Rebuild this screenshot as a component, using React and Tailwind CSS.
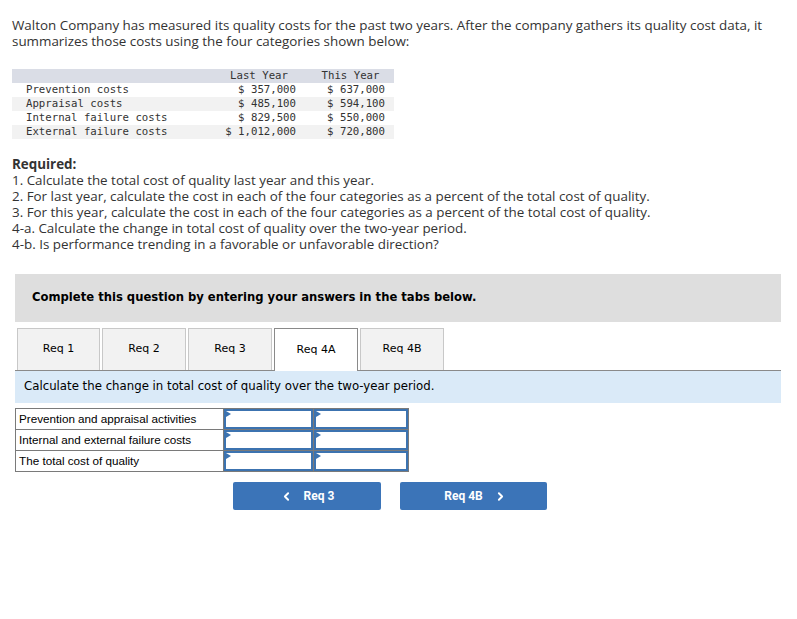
import { FiChevronLeft, FiChevronRight } from "react-icons/fi";

const costs = [
  ["Prevention costs", "$ 357,000", "$ 637,000"],
  ["Appraisal costs", "$ 485,100", "$ 594,100"],
  ["Internal failure costs", "$ 829,500", "$ 550,000"],
  ["External failure costs", "$ 1,012,000", "$ 720,800"],
];

const required = [
  "1. Calculate the total cost of quality last year and this year.",
  "2. For last year, calculate the cost in each of the four categories as a percent of the total cost of quality.",
  "3. For this year, calculate the cost in each of the four categories as a percent of the total cost of quality.",
  "4-a. Calculate the change in total cost of quality over the two-year period.",
  "4-b. Is performance trending in a favorable or unfavorable direction?",
];

const tabs = ["Req 1", "Req 2", "Req 3", "Req 4A", "Req 4B"];

const rows = [
  "Prevention and appraisal activities",
  "Internal and external failure costs",
  "The total cost of quality",
];

function InputBox() {
  return (
    <div className="relative h-[20px] border-2 border-[#3c73b0] bg-white">
      <span className="absolute left-0 top-0 w-0 h-0 border-y-[3px] border-y-transparent border-l-[5px] border-l-[#3c73b0]" />
    </div>
  );
}

function App() {
  return (
    <div className="w-[797px] min-h-[619px] bg-white text-[#333] font-['Open_Sans',sans-serif]">
      <div className="pl-[12px] pt-[17px] pr-[16px]">
        <p className="text-[13.4px] leading-[16px]">
          Walton Company has measured its quality costs for the past two years. After the company gathers its quality cost data, it summarizes those costs using the four categories shown below:
        </p>

        <table className="mt-[20px] w-[382px] border-collapse font-['DejaVu_Sans_Mono',monospace] text-[10.7px] leading-[14px] text-[#333]">
          <thead>
            <tr className="bg-[#dadde6]">
              <th className="w-[206px] h-[14px]" />
              <th className="w-[83px] font-normal text-center pr-[1px]">Last Year</th>
              <th className="font-normal text-center pl-[6px]">This Year</th>
            </tr>
          </thead>
          <tbody>
            {costs.map((c, i) => (
              <tr key={c[0]} className={i % 2 === 1 ? "bg-[#f2f2f2]" : "bg-white"}>
                <td className="pl-[14px] h-[14px] text-left">{c[0]}</td>
                <td className="text-right pr-[5px]">{c[1]}</td>
                <td className="text-right pr-[9px]">{c[2]}</td>
              </tr>
            ))}
          </tbody>
        </table>

        <div className="mt-[17px] text-[13.4px] leading-[16px]">
          <p className="font-bold">Required:</p>
          {required.map((r) => (
            <p key={r}>{r}</p>
          ))}
        </div>
      </div>

      <div className="ml-[15px] w-[766px] mt-[22px] font-['DejaVu_Sans',sans-serif]">
        <div className="h-[48px] bg-[#dedede] flex items-center pl-[17px] pb-[1px] text-[11.6px] font-bold text-black">
          Complete this question by entering your answers in the tabs below.
        </div>

        <div className="mt-[6px] flex gap-[2px] pl-[2px] border-b border-[#8a8a8a]">
          {tabs.map((t, i) => (
            <div
              key={t}
              className={
                t === "Req 4A"
                  ? "w-[84px] h-[43px] -mb-px flex items-center justify-center bg-white border border-b-0 border-[#8a8a8a] text-[11px] text-black"
                  : i === 0
                    ? "w-[83px] h-[42px] flex items-center justify-center bg-[#f2f2f2] border border-b-0 border-[#c8c8c8] text-[11px] text-black"
                    : "w-[84px] h-[42px] flex items-center justify-center bg-[#f2f2f2] border border-b-0 border-[#c8c8c8] text-[11px] text-black"
              }
            >
              {t}
            </div>
          ))}
        </div>

        <div className="h-[32px] bg-[#daeaf8] flex items-center pl-[9px] text-[11.75px] text-black">
          Calculate the change in total cost of quality over the two-year period.
        </div>

        <table className="mt-[5px] border-collapse border border-[#7a7a7a] font-['Liberation_Sans',sans-serif] text-[11.7px] text-black">
          <tbody>
            {rows.map((r) => (
              <tr key={r}>
                <td className="w-[208px] h-[20px] border border-[#7a7a7a] pl-[3px] py-0 leading-[18px]">{r}</td>
                <td className="w-[90px] p-0 border border-[#7a7a7a]">
                  <InputBox />
                </td>
                <td className="w-[95px] p-0 border border-[#7a7a7a]">
                  <InputBox />
                </td>
              </tr>
            ))}
          </tbody>
        </table>

        <div className="mt-[10px] ml-[218px] flex gap-[19px] font-['Roboto',sans-serif] text-[12px] font-bold text-white">
          <button type="button" className="w-[148px] h-[28px] bg-[#3b74b8] rounded-[2px] flex items-center justify-center gap-[11px]">
            <FiChevronLeft size={13} strokeWidth={3.5} />
            <span>Req 3</span>
          </button>
          <button type="button" className="w-[147px] h-[28px] bg-[#3b74b8] rounded-[2px] flex items-center justify-center gap-[11px] pl-[4px]">
            <span>Req 4B</span>
            <FiChevronRight size={13} strokeWidth={3.5} />
          </button>
        </div>
      </div>
    </div>
  );
}

export default App;
